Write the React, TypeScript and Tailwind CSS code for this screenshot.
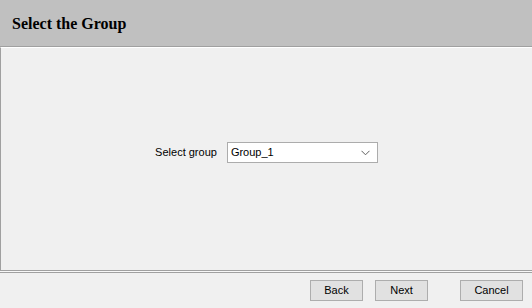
export default function App() {
  const ui = { fontFamily: '"Liberation Sans", Arial, sans-serif' };

  return (
    <div className="flex h-[308px] w-[532px] flex-col overflow-hidden bg-[#f0f0f0]" style={ui}>
      {/* title bar */}
      <div className="flex h-[47px] shrink-0 items-center border-b border-[#a0a0a0] bg-[#c0c0c0] pl-[12px] pt-[2px]">
        <h1
          className="text-[16px] font-bold text-black"
          style={{ fontFamily: '"Liberation Serif", "Times New Roman", serif' }}
        >
          Select the Group
        </h1>
      </div>

      {/* body panel */}
      <div className="flex h-[224px] shrink-0 items-center justify-center border-b border-l border-t border-b-[#a0a0a0] border-l-[#a0a0a0] border-t-white pb-[13px]">
        <div className="flex items-center gap-[10px] text-[11px] text-black">
          <span>Select group</span>
          <div className="flex h-[21px] w-[151px] items-center justify-between border border-[#acacac] bg-white pl-[3px] pr-[7px]">
            <span>Group_1</span>
            <svg width="9" height="6" viewBox="0 0 9 6" className="mt-[1px]">
              <path d="M0.5 0.8 L4.5 4.8 L8.5 0.8" fill="none" stroke="#606060" strokeWidth="1" />
            </svg>
          </div>
        </div>
      </div>

      {/* separator */}
      <div className="h-px shrink-0 bg-[#f8f8f8]" />
      <div className="h-px shrink-0 bg-[#a0a0a0]" />

      {/* footer */}
      <div className="flex flex-1 items-start justify-end pr-[9px] pt-[7px] text-[11px] text-black">
        <button className="h-[21px] w-[53px] border border-[#adadad] bg-[#e1e1e1]">Back</button>
        <button className="ml-[12px] h-[21px] w-[53px] border border-[#adadad] bg-[#e1e1e1]">Next</button>
        <button className="ml-[32px] h-[21px] w-[63px] border border-[#adadad] bg-[#e1e1e1]">Cancel</button>
      </div>
    </div>
  );
}
